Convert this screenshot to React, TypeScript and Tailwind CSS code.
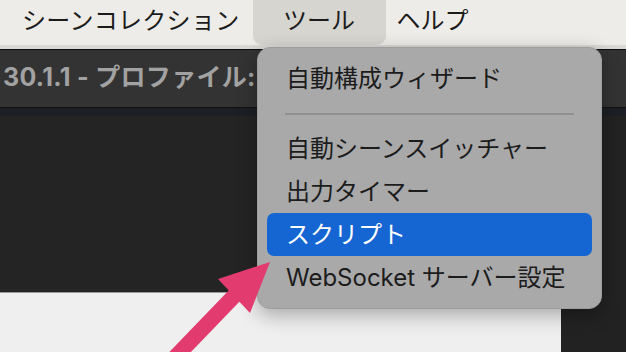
const jp = "font-['Inter','Noto_Sans_CJK_JP',sans-serif]";

const MenuItem = ({ label, active = false }: { label: string; active?: boolean }) => (
  <div
    className={`flex items-center h-[43px] pl-[19px] rounded-[7px] ${
      active ? "bg-[#1566d3] text-white" : "text-[#1c1c1c]"
    }`}
  >
    {label}
  </div>
);

const App = () => {
  return (
    <div className={`relative w-[626px] h-[352px] overflow-hidden bg-[#232323] ${jp}`}>
      <div className="flex flex-col h-full">
        {/* mac menu bar */}
        <div className="flex items-center h-[45px] bg-[#edece8] text-[24px] text-[#1b1b1b] pb-[3px]">
          <span className="ml-[22px] tracking-[0.3px]">シーンコレクション</span>
          <div className="ml-[13px] w-[133px] h-[45px] mb-[-3px] pb-[3px] flex items-center justify-center bg-[#d6d5d0] rounded-b-[9px]">
            ツール
          </div>
          <span className="ml-[11px]">ヘルプ</span>
        </div>
        <div className="h-[4px] bg-[#d9d8d4]" />
        <div className="h-px bg-[#0e0e0e]" />

        {/* window title */}
        <div className="flex items-center h-[57px] bg-[#333333] pl-[3px] pb-[2px]">
          <span className="text-[25px] font-bold text-[#a2a2a2] whitespace-nowrap tracking-[0.3px]">
            30.1.1 - プロファイル:
          </span>
        </div>
        <div className="h-px bg-[#101010]" />
        <div className="h-[8px] bg-[#1c1f25]" />

        {/* window body */}
        <div className="flex flex-1">
          <div className="flex flex-col w-[561px]">
            <div className="h-[176px] bg-[#242424]" />
            <div className="h-px bg-[#9a9a9a]" />
            <div className="flex-1 bg-[#efefef]" />
          </div>
          <div className="flex-1 bg-[#222222]" />
        </div>
      </div>

      {/* dropdown */}
      <div className="absolute left-[257px] top-[47px] w-[345px] h-[262px] rounded-[13px] bg-[#a9a9aa] border border-[#9d9d9d] shadow-[0_6px_20px_rgba(0,0,0,0.3)] px-[9px] pt-[9px] text-[24px]">
        <MenuItem label="自動構成ウィザード" />
        <div className="h-[27px] flex items-center px-[18px]">
          <div className="h-[2px] w-full bg-[#909091]" />
        </div>
        <MenuItem label="自動シーンスイッチャー" />
        <MenuItem label="出力タイマー" />
        <MenuItem label="スクリプト" active />
        <MenuItem label="WebSocket サーバー設定" />
      </div>

      {/* arrow */}
      <svg className="absolute inset-0 pointer-events-none" width="626" height="352" viewBox="0 0 626 352">
        <polygon points="270,262 218,279 250,313" fill="#e23b70" />
        <polygon points="243,298 232,287 152,370 163,381" fill="#e23b70" />
      </svg>
    </div>
  );
};

export default App;
